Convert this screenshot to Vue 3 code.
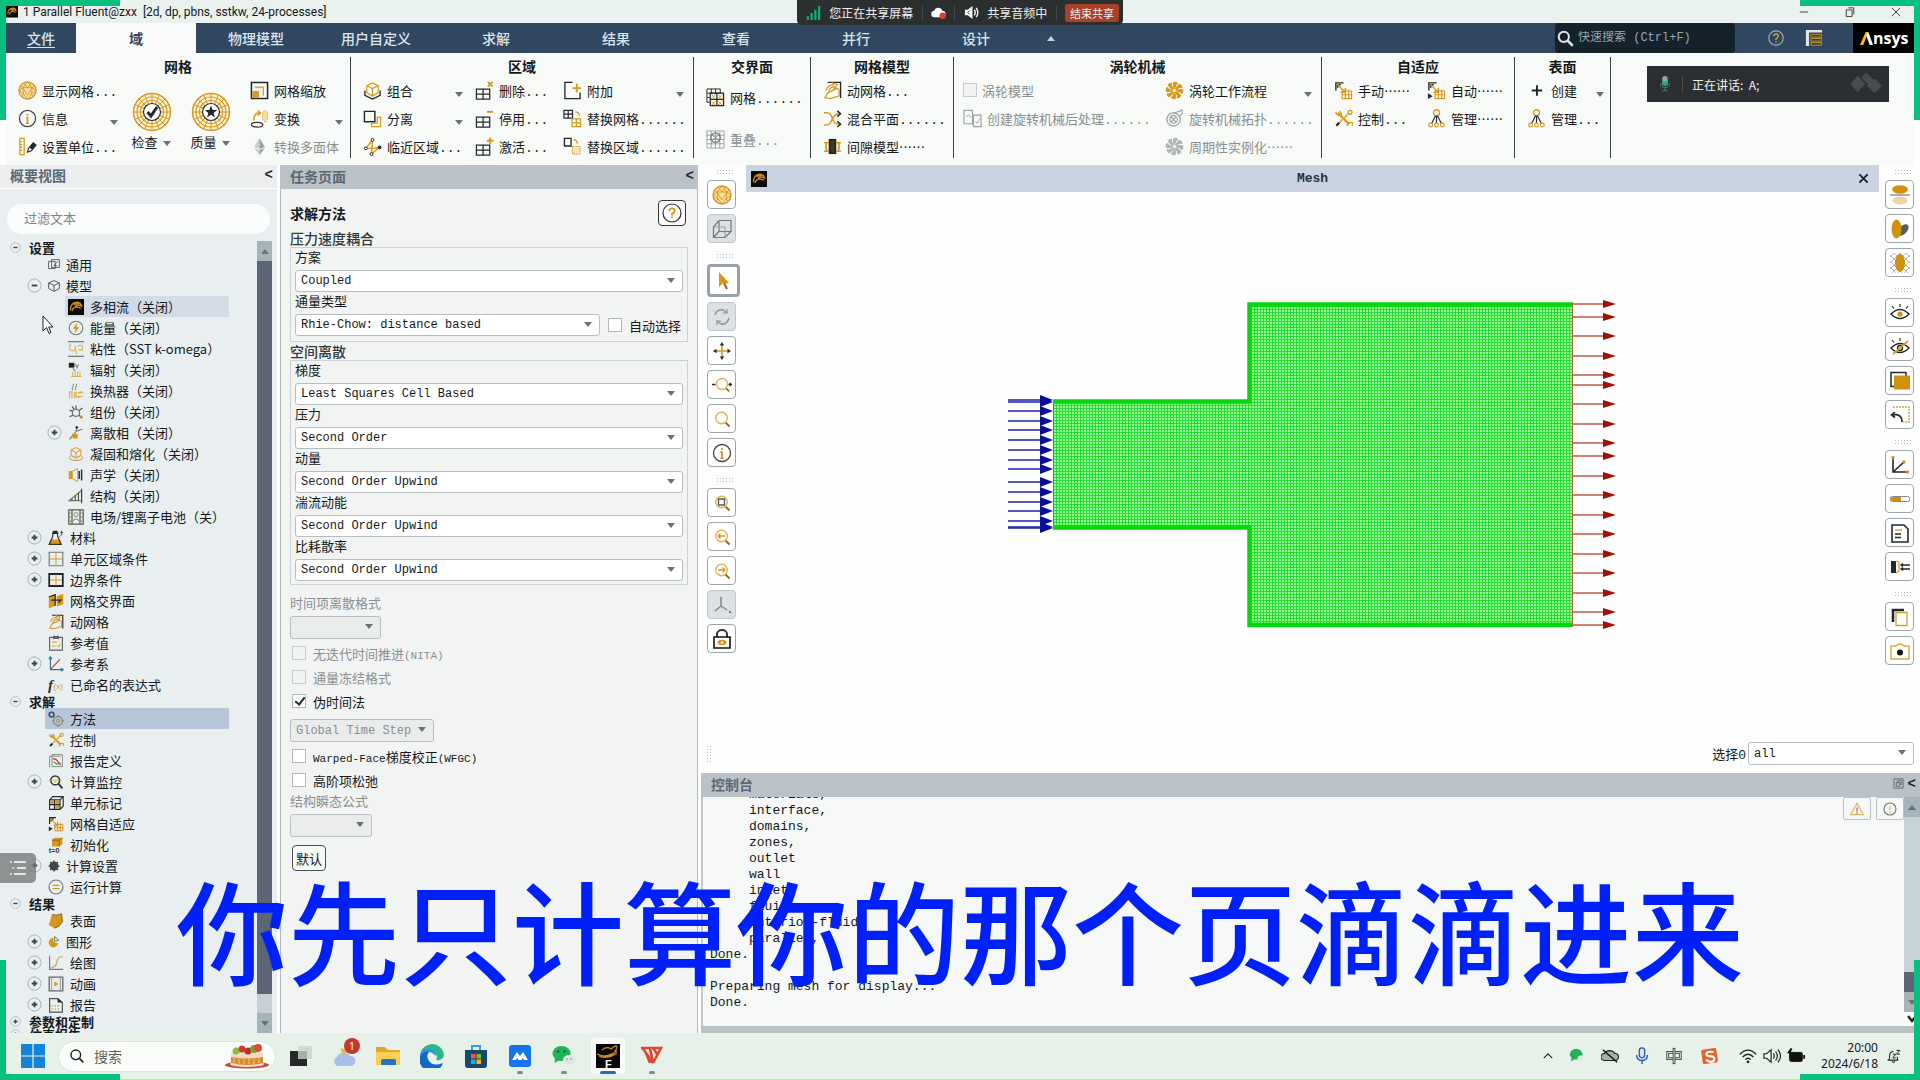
<template>
  <div class="app">
    <header class="titlebar">
      <svg class="app-icon" viewBox="0 0 20 20" v-html="icons.fluent"></svg>
      <span class="title">1 Parallel Fluent@zxx&nbsp; [2d, dp, pbns, sstkw, 24-processes]</span>
      <div class="win-buttons">
        <button aria-label="最小化"><svg viewBox="0 0 12 12"><path d="M1 6h10" stroke="#222" fill="none" /></svg></button>
        <button aria-label="还原"><svg viewBox="0 0 12 12"><path d="M1.500 3.500h7v8h-7zM4 1h6.500v8" stroke="#222" fill="none" /></svg></button>
        <button aria-label="关闭"><svg viewBox="0 0 12 12"><path d="M1 1l10 10M11 1L1 11" stroke="#222" fill="none" /></svg></button>
      </div>
    </header>

    <nav class="tabs">
      <button class="tab tab-file">文件</button>
      <button v-for="t in tabs" :key="t" class="tab" :class="{ active: t === '域' }">{{ t }}</button>
      <button class="tab-collapse" aria-label="折叠功能区"><i class="tri up"></i></button>
      <label class="quick-search">
        <svg viewBox="0 0 20 20"><circle cx="8" cy="8" r="6" fill="none" stroke="#dde3e8" stroke-width="2.400" /><path d="M12.500 12.500l6 6" stroke="#dde3e8" stroke-width="3" /></svg>
        <input type="text" placeholder="快速搜索 (Ctrl+F)" />
      </label>
      <button class="tab-icon" aria-label="帮助">
        <svg viewBox="0 0 20 20"><circle cx="10" cy="10" r="8" fill="none" stroke="#9fb0b8" stroke-width="1.300" /><path d="M7.500 8q0-2.500 2.500-2.500t2.500 2.300q0 1.400-2.500 3.200v1.500M10 13.500v1.500" fill="none" stroke="#c9a640" stroke-width="1.500" /></svg>
      </button>
      <button class="tab-icon" aria-label="布局">
        <svg viewBox="0 0 20 20"><path d="M1 1h18v3H1zM1 4h3.500v15H1z" fill="#dfe5ea" /><path d="M6.500 6h12v3h-12zM6.500 10.500h12v3h-12zM6.500 15h12v3h-12z" fill="#3a3f38" stroke="#c99a2a" /></svg>
      </button>
      <div class="ansys" aria-label="Ansys">
        <svg viewBox="0 0 14 16"><path d="M0 15L6 1h3L3.500 15z" fill="#ffb71b" /><path d="M6.500 4.500L9 1l5 14h-3.500z" fill="#fff" /></svg>nsys
      </div>
    </nav>

    <section class="ribbon">
      <div v-for="g in groups" :key="g.title" class="group" :class="g.cls">
        <h2>{{ g.title }}</h2>
        <div class="cols">
          <div v-for="(col, i) in g.cols" :key="i" class="col">
            <template v-for="it in col" :key="it.label">
              <label v-if="it.check" class="item disabled">
                <input type="checkbox" class="cb" disabled /><span>{{ it.label }}</span>
              </label>
              <button v-else class="item" :class="{ disabled: it.off, big: it.big, cjk: it.label.includes('…') }" :disabled="it.off">
                <svg :viewBox="it.big ? '0 0 40 40' : '0 0 20 20'" v-html="icons[it.icon]"></svg>
                <span>{{ it.label }}</span>
                <i v-if="it.drop" class="tri down"></i>
              </button>
            </template>
          </div>
        </div>
      </div>
    </section>

    <main class="main">
      <!-- outline tree -->
      <aside class="outline">
        <header class="panel-head light"><span>概要视图</span><button aria-label="折叠">{{ '<' }}</button></header>
        <input class="filter" type="text" placeholder="过滤文本" aria-label="过滤文本" />
        <div class="tree-wrap">
          <ul class="tree">
            <li v-for="n in tree" :key="n.text" :class="['lv' + n.lv, { small: n.small, hover: n.hover, selected: n.sel }]">
              <button v-if="n.t" class="toggle" :aria-label="n.t === '+' ? '展开' : '收起'">
                <svg viewBox="0 0 16 16">
                  <circle cx="8" cy="8" r="7" fill="none" stroke="#a4adb1" />
                  <path :d="n.t === '+' ? 'M5 8h6M8 5v6' : 'M5 8h6'" stroke="#3c4449" stroke-width="2" />
                </svg>
              </button>
              <span v-else class="toggle"></span>
              <span class="node">
                <svg v-if="n.icon" viewBox="0 0 20 20" v-html="icons[n.icon]"></svg>{{ n.text }}
              </span>
            </li>
          </ul>
          <div class="vbar"><i class="vbtn"><i class="tri up"></i></i><i class="vthumb"></i><i class="vrest"></i><i class="vbtn"><i class="tri down"></i></i></div>
        </div>
      </aside>

      <!-- task page -->
      <section class="task">
        <header class="panel-head"><span>任务页面</span><button aria-label="折叠">{{ '<' }}</button></header>
        <div class="task-body">
          <div class="task-title">
            <h3>求解方法</h3>
            <button class="help" aria-label="帮助"><svg viewBox="0 0 20 20" v-html="icons.help"></svg></button>
          </div>

          <h4>压力速度耦合</h4>
          <div class="box">
            <label for="scheme">方案</label>
            <span class="sel"><select id="scheme"><option>Coupled</option></select></span>
            <label for="flux">通量类型</label>
            <div class="flux-row">
              <span class="sel"><select id="flux"><option>Rhie-Chow: distance based</option></select></span>
              <label class="check"><input type="checkbox" class="cb" />自动选择</label>
            </div>
          </div>

          <h4>空间离散</h4>
          <div class="box box-last">
            <template v-for="(f, i) in spatial" :key="f[0]">
              <label :for="'sp' + i">{{ f[0] }}</label>
              <span class="sel"><select :id="'sp' + i"><option>{{ f[1] }}</option></select></span>
            </template>
          </div>

          <div class="options">
            <label for="transient" class="off">时间项离散格式</label>
            <span class="sel off w-short"><select id="transient" disabled><option></option></select></span>
            <label class="check off"><input type="checkbox" class="cb" disabled /><span>无迭代时间推进<small>(NITA)</small></span></label>
            <label class="check off"><input type="checkbox" class="cb" disabled />通量冻结格式</label>
            <label class="check"><input type="checkbox" class="cb" checked />伪时间法</label>
            <span class="sel off w-long"><select aria-label="伪时间法类型" disabled><option>Global Time Step</option></select></span>
            <label class="check"><input type="checkbox" class="cb" /><span><small>Warped-Face</small>梯度校正<small>(WFGC)</small></span></label>
            <label class="check"><input type="checkbox" class="cb" />高阶项松弛</label>
            <label for="struct" class="off">结构瞬态公式</label>
            <span class="sel off w-tiny"><select id="struct" disabled><option></option></select></span>
            <button class="default">默认</button>
          </div>
        </div>
      </section>

      <section class="work">
        <div class="graphics">
          <div class="tools tools-left">
            <template v-for="(t, i) in leftTools" :key="i">
              <i v-if="t === '-'" class="grip"></i>
              <button v-else :class="{ pressed: t.on, gray: t.off }" :aria-label="t.name"><svg viewBox="0 0 20 20" v-html="icons[t.icon]"></svg></button>
            </template>
          </div>
          <div class="view">
            <header class="view-head">
              <svg viewBox="0 0 20 20" v-html="icons.fluent"></svg>
              <span>Mesh</span>
              <button aria-label="关闭"><svg viewBox="0 0 12 12"><path d="M1.500 1.500l9 9M10.500 1.500l-9 9" stroke="#1c2330" stroke-width="2" /></svg></button>
            </header>
            <svg class="canvas" viewBox="746 192 1133 548">
              <defs>
                <pattern id="cells" width="3" height="3" patternUnits="userSpaceOnUse">
                  <rect width="3" height="3" fill="#96fb96" />
                  <path d="M0 .5h3M.5 0v3" stroke="#2ade31" />
                </pattern>
              </defs>
              <path d="M1053 401H1250V304H1572V625H1250V527H1053z" fill="url(#cells)" />
              <path d="M1053 401.500H1249.500V304.500H1572M1053 527.500H1249.500V625H1572" fill="none" stroke="#06d60d" stroke-width="4.500" />
              <path d="M1572.500 302V627" stroke="#b5642c" />
              <path d="M1053.500 404V525" stroke="#4a6ae0" />
              <g v-for="y in inlet" :key="'i' + y">
                <path :d="`M1008 ${y}H1041`" stroke="#1a1fa8" stroke-width="1.300" />
                <path :d="`M1040 ${y - 5}L1053 ${y}L1040 ${y + 5}z`" fill="#0a0f98" />
              </g>
              <g v-for="y in outlet" :key="'o' + y">
                <path :d="`M1573 ${y}H1604`" stroke="#b8402c" stroke-width="1.300" />
                <path :d="`M1603 ${y - 4}L1616 ${y}L1603 ${y + 4}z`" fill="#9c1408" />
              </g>
            </svg>
          </div>
          <div class="tools tools-right">
            <template v-for="(t, i) in rightTools" :key="i">
              <i v-if="t === '-'" class="grip"></i>
              <button v-else :aria-label="t.name"><svg viewBox="0 0 20 20" v-html="icons[t.icon]"></svg></button>
            </template>
          </div>
        </div>

        <div class="selection">
          <i class="vgrip"></i>
          <label for="pick">选择0</label>
          <span class="sel"><select id="pick"><option>all</option></select></span>
        </div>

        <div class="console">
          <header class="panel-head">
            <span>控制台</span>
            <button aria-label="浮动"><svg viewBox="0 0 12 12"><path d="M1 1h10v10H1zM3.500 5h4v4h-4zM5 5V3h4v4H7.500" fill="none" stroke="#5c6670" /></svg></button>
            <button aria-label="折叠">{{ '<' }}</button>
          </header>
          <div class="console-body">
            <pre>{{ log }}</pre>
            <div class="console-buttons">
              <button aria-label="警告"><svg viewBox="0 0 20 20"><path d="M10 3L18 17H2z" fill="none" stroke="#dcb464" stroke-width="1.500" /><path d="M10 8v5M10 14v2" stroke="#8b7440" stroke-width="1.600" /></svg></button>
              <button aria-label="信息"><svg viewBox="0 0 20 20"><circle cx="10" cy="10" r="7.500" fill="none" stroke="#777" stroke-width="1.400" /><path d="M10 5.500v6M10 13v2" stroke="#d6b95c" stroke-width="1.500" /></svg></button>
            </div>
            <div class="cbar">
              <i class="vbtn"><i class="tri up"></i></i><i class="crest"></i><i class="cthumb"></i><i class="vbtn"><i class="tri down"></i></i>
              <svg class="ccorner" viewBox="0 0 16 14"><path d="M4 4l4 5 4-5" fill="none" stroke="#222" stroke-width="2.400" /></svg>
            </div>
          </div>
        </div>
      </section>
    </main>

    <footer class="taskbar">
      <button class="tb" aria-label="开始"><svg viewBox="0 0 24 24"><path d="M0 0h11.400v11.400H0zM12.600 0H24v11.400H12.600zM0 12.600h11.400V24H0zM12.600 12.600H24V24H12.600z" fill="#1583d8" /></svg></button>
      <label class="tb-search">
        <svg viewBox="0 0 20 20"><circle cx="8.500" cy="8.500" r="6" fill="none" stroke="#222" stroke-width="1.800" /><path d="M13 13l5 5" stroke="#222" stroke-width="2" /></svg>
        <input type="text" placeholder="搜索" />
        <svg class="cake" viewBox="0 0 46 26">
          <ellipse cx="23" cy="22" rx="22" ry="3.500" fill="#c94b3c" /><ellipse cx="23" cy="21" rx="17" ry="3" fill="#f3e3d4" />
          <path d="M7 10h32v10q-16 4-32 0z" fill="#d98a2e" /><path d="M7 10q16-4 32 0v4q-16 3-32 0z" fill="#f5d9c4" />
          <path d="M10 15v5M15 16v5M20 16v5M25 16v5M30 16v5M35 15v5" stroke="#f0b45c" stroke-width="1.500" />
          <circle cx="12" cy="8" r="3.500" fill="#8dbb3c" /><circle cx="18" cy="6" r="3.500" fill="#d33a2c" /><circle cx="24" cy="8" r="3.500" fill="#c42c26" /><circle cx="30" cy="6" r="4" fill="#6ea63a" /><circle cx="34" cy="5" r="4" fill="#e04a35" />
        </svg>
      </label>
      <button v-for="a in apps" :key="a.icon" class="tb" :class="{ run: a.run, current: a.current }" :aria-label="a.name">
        <svg viewBox="0 0 24 24" v-html="icons[a.icon]"></svg>
        <b v-if="a.badge" class="badge">{{ a.badge }}</b>
      </button>
      <div class="tray">
        <svg v-for="t in tray" :key="t" viewBox="0 0 20 20" :class="'tray-' + t" v-html="icons[t]"></svg>
      </div>
      <div class="clock"><span>20:00</span><span>2024/6/18</span></div>
      <svg class="bell" viewBox="0 0 20 20" v-html="icons.bell"></svg>
    </footer>

    <!-- meeting overlays -->
    <i class="corner tl"></i><i class="corner tr"></i><i class="corner bl"></i><i class="corner br"></i>
    <div class="share-bar">
      <svg viewBox="0 0 16 16"><path d="M2 16v-4M6 16V8.500M10 16V5M14 16V1" stroke="#19a974" stroke-width="2.400" /></svg>
      <span>您正在共享屏幕</span>
      <i></i>
      <svg viewBox="0 0 16 16"><path d="M4 13a3.500 3.500 0 0 1-.5-7 4.500 4.500 0 0 1 8.500 0 3.500 3.500 0 0 1 0 7z" fill="#fff" /><circle cx="12.500" cy="11.500" r="3.500" fill="#e33c2e" /></svg>
      <i></i>
      <svg viewBox="0 0 16 16"><path d="M1 5h3l5-4v14l-5-4H1z" fill="#fff" /><path d="M11 5q2 3 0 6M13 3q3.500 5 0 10" fill="none" stroke="#fff" stroke-width="1.400" /><path d="M6 6l-2 2 2 2" stroke="#333" fill="none" /></svg>
      <span>共享音频中</span>
      <i></i>
      <button>结束共享</button>
    </div>
    <div class="speaking">
      <svg viewBox="0 0 12 20"><rect x="3" y="1" width="6" height="11" rx="3" fill="#8fa6a0" /><path d="M3 7h6v2a3 3 0 0 1-6 0z" fill="#1fae7c" /><path d="M1 9q0 5 5 5t5-5M6 14v3M3 17.500h6" fill="none" stroke="#3d8f78" /></svg>
      <span>正在讲话: &nbsp;A;</span>
      <svg class="wave" viewBox="0 0 40 28"><path d="M9 5l8 9-8 9-8-9zM18 1l8 9-5 6-8-9zM27 8l8 8-8 8-8-8z" fill="#55585b" opacity=".7" /></svg>
    </div>
    <button class="side-menu" aria-label="菜单">
      <svg viewBox="0 0 18 16"><path d="M5 2h12M8 8h9M5 14h12M1 2h1.500M3.500 8h1.500M1 14h1.500" stroke="#fff" stroke-width="1.600" /></svg>
    </button>
    <svg class="cursor" viewBox="0 0 12 20"><path d="M1 1v15l3.500-3.500L7 18.500l2-1-2.300-5.500H11z" fill="#fff" stroke="#222" /></svg>
    <p class="caption">你先只计算你的那个页滴滴进来</p>
  </div>
</template>

<script setup>
const G = '#d6981c'
const K = '#23282c'
const S = '#9ba1a4'

const line = (d, c = K, w = 1.4) => `<path d="${d}" fill="none" stroke="${c}" stroke-width="${w}"/>`
const fill = (d, c = G) => `<path d="${d}" fill="${c}"/>`
const ring = (x, y, r, c = K, w = 1.4, f = 'none') => `<circle cx="${x}" cy="${y}" r="${r}" fill="${f}" stroke="${c}" stroke-width="${w}"/>`

const web = ring(20, 20, 18.5, G, 1.5, '#fdf3d8') + ring(20, 20, 15, G, 1.2) + ring(20, 20, 11.5, G, 1.2) +
  line('M20 1v38M1 20h38M6.500 6.500l27 27M33.500 6.500l-27 27M12.500 3l15 34M27.500 3l-15 34M3 12.500l34 15M3 27.500l34-15', G, 1) +
  ring(20, 20, 8.5, K, 1.2, '#fff')
const cells = line('M1.500 8.500h14v10.500h-14zM8.500 8.500V19M1.500 13.700h14', K, 1.3)
const tools = line('M4 4l12 12', G, 2.4) + line('M16 4L4 16', '#e0b04a', 2) + line('M2 3q0 4 4 3.500T5.500 2M14 18q0-4 3.500-4t1.500 3.500', G, 1.4) + line('M2.500 17.500l3-3', K, 2.4) + ring(17, 3.5, 2, G)
const adapt = line('M2 10V2h8M4 7V4h3', K, 1.5) + line('M3 3l9 9M12 7v5H7', G, 1.5) + line('M8.500 10.500h10v8h-10zM12 9v10M15.500 9v10M8 14.500h11', G, 1.2)
const manage = ring(10, 4, 3.2, G) + line('M9 7l-4 8M10 7v8M11 7l4 8', K, 1.2) + ring(3.8, 16.8, 2, G, 1.2) + ring(10, 16.8, 2, G, 1.2) + ring(16.2, 16.8, 2, G, 1.2)
const fan = c => [0, 45, 90, 135, 180, 225, 270, 315].map(a => `<path d="M10 10Q7.500 5 9 .8q4-.6 5 2-2.500.6-2.600 3.200z" fill="${c}" transform="rotate(${a} 10 10)"/>`).join('') + '<circle cx="10" cy="10" r="1.500" fill="#fff"/>'
const lens = line('M13.500 13.500l4 4', '#86672a', 1.8) + ring(9.5, 9, 5.8, '#dfb355', 1.4)
const dyn = line('M5 1.500h13.500V18', K, 1.4) + line('M3 10q2-6 8-6l-1-2 5 2-3 4-.5-2Q7 7 6 11M2 17.500l3-5 10-5 2 2v6l-9 3z', G, 1.3)
const box3d = c => line('M3 6l7-3 7 3v8l-7 3.500L3 14zM3 6l7 3 7-3M10 9v8.500', c, 1.3)

const icons = {
  fluent: fill('M0 0h20v20H0z', '#0b0a08') + line('M3 14q0-9 8-10 5 0 6 5-5-3-8 0M5 15q1-5 6-5 3 0 5 2M7 7q4-2 7-1', '#c98a1c', 1.7),
  ball: ring(10, 10, 9, G, 1.4, '#f8dfa0') + line('M10 1L5 7l-4 3 5 4 4 5 4-5 5-4-4-3zM5 7h10l-5 8zM3 5l2 2 1 7-2 2M17 5l-2 2-1 7 2 2M6 2l4 5 4-5', G, .9),
  info: ring(10, 10, 8.5, '#444', 1.3) + line('M10 5v2M10 8.500V15M8.500 15h3M8.500 9H10', G, 1.8),
  help: ring(10, 10, 9, '#333', 1.2) + line('M7.200 8q0-2.700 2.800-2.700t2.800 2.300q0 1.600-2.800 3.400v1.500M10 13.500v1.700', G, 1.8),
  units: line('M2 1.500h4.500v17H2zM2 5h2.500M2 8h2.500M2 11h2.500M2 14h2.500', G, 1.3) + line('M10 16l1-4 5-6 3 2.500-5 6z', K, 1.2) + fill('M12 11l4-5 3 2.500-4 5z', K),
  check: web + line('M15.500 20l3.500 4 6-9', K, 3),
  star: web + fill('M20 13.500l1.700 4.500h4.600l-3.700 2.900 1.400 4.600-4-2.800-4 2.800 1.400-4.600-3.700-2.900h4.600z', K),
  scale: line('M1.500 1.500h17v17h-17z', K, 1.6) + fill('M2.500 10.500h7v7h-7z') + line('M5 6.500h9v9', G, 1.3),
  transform: '<ellipse cx="7.500" cy="16.500" rx="6" ry="2.500" fill="none" stroke="#333" stroke-width="1.300"/><ellipse cx="16" cy="7.500" rx="2.800" ry="6" fill="#f7e0a8" stroke="#d6981c" stroke-dasharray="1.500 1"/>' + line('M4 12q0-8 6-8M8 1.500L11 4 8 7', G, 1.5),
  poly: fill('M10 1L4 11l6 8z', '#c9cdce') + fill('M10 1l6 10-6 8z', '#9a9fa1') + line('M4 11l6 2 6-2', '#fff', 1),
  combine: line('M2 10v5l8 4 8-4v-5', K, 1.4) + line('M4 5l6-3 6 3v7l-6 4-6-4zM4 5l6 3 6-3M10 8v8', G, 1.3),
  separate: line('M1.500 2.500h11v11h-11z', K, 1.5) + line('M15 8.500h3.500v10H9V15h6z', G, 1.3),
  adjacent: line('M3 12L10 3l-1 15 8-7M3 12h8l6-1', G, 1.5) + ring(10, 3, 1.5, K, 1, '#fff') + ring(3, 12, 1.5, K, 1, '#fff') + ring(17.5, 11, 1.5, K, 1, K) + ring(9, 18, 1.5, K, 1, '#fff'),
  cellDel: cells + line('M13.500 1l5 5M18.500 1l-5 5', G, 2),
  cellOff: cells + line('M12.500 3H19', G, 2),
  cellOn: cells + line('M12.500 4h7M16 .5v7', G, 2),
  append: line('M10 1.500H2v17h16V12', K, 1.4) + line('M10 7.500h9M14.500 3v9', G, 2),
  replaceMesh: line('M1 1.500h9v8H1zM5.500 1.500v8M1 5.500h9', K, 1.3) + line('M9.500 10.500h9v8h-9zM14 10.500v8M9.500 14.500h9M13 3q4 0 4 4', G, 1.3),
  replaceZone: line('M1.500 1.500h7v8h-7z', K, 1.4) + `<path d="M10 10h8v8h-8z" fill="#f5e6c0" stroke="${G}" stroke-dasharray="2 1"/>` + line('M11 3q4 0 4 4', G),
  ifGrid: line('M1 1h14v14H1zM5.500 1v14M10 1v14M1 5.500h14M1 10h14', K, 1) + '<path d="M4 6h15v13H4z" fill="#fdf7e6"/>' + line('M4.500 5.500h14v13h-14zM11.500 6v13M5 12h14', K, 1.3) + line('M6 7l4 4M10 7l-4 4M13 7l4 4M17 7l-4 4M6 14l4 4M10 14l-4 4M13 14l4 4M17 14l-4 4', G, 1),
  overset: line('M1 1h18v18H1zM1 5.500h18M1 10h18M1 14.500h18M5.500 1v18M10 1v18M14.500 1v18', S, 1) + ring(10, 8, 5, '#777', 1.3) + line('M6 5l8 6M14 5l-8 6', '#888', 1),
  dyn,
  mixing: line('M1 4h3q4 0 6 6t6 6h2M1 17h2q4 0 6-5t6-7h3', G, 1.5) + line('M15 13l3.500 3-3.500 3M15 2l3.500 3L15 8', K, 1.5),
  gap: fill('M6 2h8v16H6z', K) + line('M1 6h5M1 15h5M14 6h5M14 15h5M4 5q-2 5 0 10M16 5q2 5 0 10', G, 1.6) + fill('M8 4h4v12H8z', '#4a3a12'),
  post: line('M1 1.500h9v14H1zM11 6.500h8v12h-8z', S, 1.2) + line('M3 8l3-2 2 3M13 13l2 2 3-5', S, 1),
  fan: fan(G),
  fanOff: fan('#b0b4b6'),
  pump: ring(9, 11, 7, S, 1.3) + ring(9, 11, 4, S, 1.2) + line('M6 8l6 6M12 8l-6 6M9 4q5-1 9-3v4l-3 3', S, 1.2),
  adapt,
  adaptAuto: adapt + fill('M1 13l5 3-5 3z', K),
  tools,
  manage,
  plus: line('M5 10h11M10.500 4.500v11', K, 2),
  general: line('M1 4h11v12H1z', '#555', 1.5) + line('M6 1h13v13H6zM16 4l-6 7h5', '#555', 1.5),
  model: line('M1 5l9-4 9 4v9l-9 5-9-5zM1 5l9 4 9-4M10 9v10', '#555', 1.6),
  energy: ring(10, 10, 8.5, '#777', 1.4) + fill('M11.500 3L6 11h3.500L8 17l6-8h-3.500z'),
  viscous: line('M0 1h20M0 19h20', '#555', 1.4) + line('M2 6v5q4 3 7-1 3 5 1 6M12 6q4-1 6 0v5h-5M4 6L2 4M9 6q1 2 0 4', '#e0b860', 1.6),
  radiation: fill('M1 1h7v6H1z', '#222') + line('M9 3l2 3M6 8l3 3M13 3l-2 5', '#777', 1.3) + line('M6 18v-6M9 18v-6M12 18v-6M15 18v-6M4 18h13', '#e0b04a', 1.3),
  heatx: line('M6 1q2 2 0 4t0 4M10 1q2 2 0 4t0 4', '#777', 1.2) + line('M2 19v-8h3v8M8 19v-7h2v7M12 12h6l-2-2M18 17h-6l2 2', '#dfae48', 1.4),
  species: ring(10, 11, 4.5, '#777', 1.6) + line('M10 6V2M5 3l3 4M6 14l-4 2M14 14l3 4M6 9L2 8M14 8l4-3', '#555', 1.5) + ring(17, 16, 1, G),
  dpm: line('M2 18L10 8l8-3M10 8l1-6', '#777', 1.5) + fill('M5 11h7v6H6z') + ring(11, 3, 1.2, K, 1, K),
  solid: line('M4 5l6-3 6 3v7l-6 3-6-3zM4 5l6 3 6-3M10 8v7', '#d9a240', 1.4) + line('M2 13q-1 5 8 5t8-5', '#bfa060', 1.5),
  acoustic: fill('M1 5h5v10H1z') + line('M6 5l6-3v16l-6-3', '#d9a240', 1.3) + line('M14 5v10M17 3v14', K, 1.8),
  structure: line('M1 16L17 3v13z', '#6b6b50', 1.3) + line('M5 16v-3M9 16V9.500M13 16V6M17 1v18', '#3a3a2a', 1.3),
  battery: line('M1 1h18v18H1zM5 1v18M15 1v18', '#5a5a4a', 1.5) + ring(10, 7, 2.5, S) + line('M6 15q4-5 8 0M1 5h4M1 10h4M15 5h4M15 10h4M1 15h4M15 15h4', '#8a8a60', 1.3),
  material: fill('M3 12h12l2 6H1z') + line('M6 4v4L1.500 18h15L12 8V4M5 4h8', '#3b3324', 1.5) + fill('M6 1h6v4H6z', K) + line('M14 9l4-4M17 1v5M15 3h4', '#555', 1.2),
  cell: line('M1.500 1.500h17v17h-17z', '#777', 1.4) + line('M10 2v16M2 10h16', G, 1.2),
  boundary: line('M1.500 2.500h17v15h-17z', '#222', 2.2) + line('M10 3v14M3 10h14', G, 1.2),
  interface: fill('M1 5l8-3v14l-8 3zM11 4l8-3v13l-8 3z') + line('M1 5l8-3v14M4 9h12M13 12l4-4', K, 1.5),
  clipboard: line('M2 3h16v16H2z', '#666', 1.5) + fill('M6 1h8v4H6z', '#666') + line('M5 9h6M5 13l2 2 2-2M11 13l2 2 3-4', G, 1.2),
  frames: line('M3 1v16h16', '#2c6ea5', 1.4) + line('M3 17L15 4', '#c8432f', 1.4) + line('M1 4l2-3 2 3M16 15l3 2-3 2', '#1b86a0', 1.3),
  fx: '<text x="0" y="16" font-family="Liberation Serif" font-style="italic" font-weight="bold" font-size="19" fill="#333">f</text><text x="7" y="15" font-family="Liberation Sans" font-size="10" fill="#d6981c">(x)</text>',
  methods: ring(4.5, 4.5, 3, '#39516b', 2) + ring(12.5, 12.5, 5.5, '#7c8a6a', 1.6) + ring(12.5, 12.5, 2, '#a5a058', 1.5) + line('M12.500 5v2M12.500 18v2M5 12.500h2M18 12.500h2', '#7c8a6a', 1.5),
  reportdef: line('M2 18V4h14M5 2h13v15H5z', '#888', 1.2) + line('M6 7l4 1 6 7', '#c43c2e', 1.5) + line('M7 11l4 3 4-1', '#3d9a50', 1.5),
  monitor: ring(9, 8, 5.5, '#333', 2) + line('M13 12l5 6', '#333', 2.4) + line('M1 8h16M9 8v3', '#c9b050', 1),
  cellreg: fill('M3 7h4v4H3zM9 13h5v4H9zM9 7h5v4H9z') + line('M2 6l4-4h13v12l-4 4H2zM2 6h13v12M15 6l4-4M8 6v12M2 12h13', K, 1.4),
  init: fill('M5 3l4-2h9v8l-4 3H5z') + line('M5 4h9v8M14 4l4-3', '#8a6010', 1) + '<text x="1" y="20" font-family="Liberation Sans" font-weight="bold" font-size="9" fill="#333">t=0</text>',
  gear: ring(10, 10, 5, '#444', 5) + line('M10 1v18M1 10h18M3.500 3.500l13 13M16.500 3.500l-13 13', '#444', 2.4),
  run: ring(10, 10, 8.8, '#777', 1.4) + line('M6 8h8M6 12h8', G, 1.7),
  surface: fill('M5 2q6 2 12-1l1 10q-4 7-10 8L1 15z') + line('M5 2q6 2 12-1l1 10q-4 7-10 8', '#7a5510', 1.1),
  graphics: fill('M9 3a8 8 0 1 0 8 9l-8-2z') + line('M11 1l7 6-7 2z', '#555', 1.3),
  plot: line('M2 1v17h17', '#777', 1.4) + line('M3 16q7 0 8-7t7-7', '#c9a860', 1.5),
  anim: line('M1.500 1.500h17v17h-17z', '#666', 1.6) + line('M4.500 2v16M15.500 2v16', '#888', 1) + fill('M8 7l5 3-5 3z'),
  reportpage: line('M2 2h10l6 5v12H2z', '#555', 1.5) + fill('M12 1l6 6h-6z', K) + line('M4 11h2M8 11h2M12 11h2M4 15h2M8 15h2M12 15h2', '#c9a040', 1.5),
  cube: line('M7 1.500h12v11H7zM7 1.500L1.500 8v10.500h11.500L19 12.500M7 12.500l-5.500 6', '#777', 1.2) + line('M2 8h11v10', S, 1.2),
  pointer: fill('M5 1v15l3.500-3.500L15 12z') + line('M10 12l3 6', '#a05a20', 2),
  rotate: line('M3 8q2-6 8-5l4 3M17 11q-2 7-8 6l-4-3', '#8a979e', 1.5) + line('M15 2v4h-4M5 18v-4h4', '#8a979e', 1.2),
  pan: line('M10 4v12M4 10h12', G, 1.6) + fill('M10 1l2.200 3.500h-4.400zM10 19l-2.200-3.500h4.400zM1 10l3.500-2.200v4.400zM19 10l-3.500-2.200v4.400z', K),
  zoomio: ring(10, 9, 5.5, '#dfb355', 1.4) + line('M14 13l3 3.500', '#86672a', 1.6) + line('M0 9.500h3.500M16.500 9.500H20M18.200 7.800v3.500', K, 1.5),
  zoom: lens,
  zoomfit: lens + line('M6.500 6h6v6h-6z', '#555', 1.3),
  zoomprev: lens + line('M6 9h7M8.500 6.500L6 9l2.500 2.500', G, 1.4),
  zoomnext: lens + line('M6 9h7M10.500 6.500L13 9l-2.500 2.500', G, 1.4),
  triad: line('M9 2v9l-6 5M9 11l6 4', '#7f888c', 1.5) + fill('M17 18v-3l3 3z', '#777'),
  lock: line('M5 8V5a5 4 0 0 1 10 0v3', '#333', 2) + line('M2 8h16v11H2z', '#111', 1.6) + '<ellipse cx="10" cy="13.500" rx="4.500" ry="2.800" fill="#d6981c"/><circle cx="10" cy="13.500" r="1.200" fill="#fff"/>',
  reflect: '<ellipse cx="10" cy="4.500" rx="8" ry="4.200" fill="#d09010"/><ellipse cx="10" cy="15.500" rx="7.500" ry="4" fill="#efd3a0"/>' + line('M0 10h20', '#777', 1.2),
  shade: '<ellipse cx="13" cy="11" rx="4" ry="7" transform="rotate(42 13 11)" fill="#5c5c5c"/><ellipse cx="6.500" cy="10" rx="5" ry="9.500" fill="#d09010"/>',
  hatch: line('M-2 6L6-2M-2 12L12-2M-2 18L18-2M0 22L22 0M6 22L22 6M12 22l10-10M14-2l8 8M8-2l14 14M2-2l20 20M-2 0l22 22M-2 6l16 16M-2 12l10 10', '#a9adaf', .8) + '<ellipse cx="10" cy="10" rx="5" ry="9" fill="#d09010"/>',
  eye: line('M1 11q9-9 18 0-9 9-18 0z', K, 1.4) + '<circle cx="10" cy="11" r="2.600" fill="#d09010"/>' + line('M10 1v3M2 3l2 2.500M18 3l-2 2.500', K, 1.2),
  eyeoff: line('M1 11q9-9 18 0-9 9-18 0z', K, 1.4) + ring(10, 11, 2.5, K) + line('M10 1v3M2 3l2 2.500', K, 1.2) + line('M3 17L18 4', G, 1.8),
  front: line('M1 1.500h15v14H1z', K, 1.5) + fill('M4 4.500h16v14H4z', '#d09010'),
  undo: '<path d="M3 2h16v15h-6" fill="none" stroke="#c9a94e" stroke-width="1.500" stroke-dasharray="2 1"/>' + line('M2 10q10-2 10 7M5 7l-3.500 3L5 12.500', K, 1.6),
  axis: line('M3 2v15h15M3 17L14 7', K, 1.6) + ring(3, 2.5, 1, G) + ring(17.5, 17, 1, G) + ring(14, 7, 1, G),
  slider: '<rect x="0" y="7.500" width="20" height="5" rx="2.500" fill="#fff" stroke="#888"/><path d="M2.500 8H11v4H2.500a2 2 0 0 1 0-4z" fill="#d09010"/>',
  note: line('M2 2h12l4 4v13H2z', K, 1.6) + line('M5 7h7', G, 1.3) + line('M5 11h6M5 14.500h6', K, 1.3),
  probe: fill('M1 4h5v12H1z', K) + line('M6 4l3 1v9l-3 2', G, 1.2) + line('M11 8h9M11 12h9M13 6.500L11 8l2 1.500M13 10.500L11 12l2 1.500', K, 1.3),
  copy: line('M3 15V3h11', K, 2.6) + line('M6 5.500h11v13H6z', '#d0a040', 1.3),
  camera: line('M1 5h5q4-4 8 0h5v13H1z', '#dba93e', 1.4) + '<circle cx="10" cy="11.500" r="3" fill="#111"/>',
  deskview: fill('M10 2h14v13H10z', '#d3d7d6') + fill('M2 7h17v15H2z', '#25292a') + fill('M10 7h9v8h-9z', '#a9aead'),
  weather: fill('M8 4q4 5-1 9h8V6z', '#f3b04a') + fill('M5 22a5 5 0 0 1 0-9 7 6 0 0 1 13-1 5 5 0 0 1 1 10z', '#aabfe8'),
  folder: fill('M0 3h9l3 3h12v15H0z', '#e0a92c') + fill('M0 8h24v13H0z', '#fbcf57') + fill('M5 17q0-2 2-2h11q2 0 2 2v4H5z', '#1d77c9'),
  edge: fill('M12 0a12 12 0 0 1 12 11q-1 6-8 5 3-5-3-7Q4 6 0 13 0 2 12 0z', '#2fb58d') + fill('M0 12q3-7 10-5-5 4-1 10t14 2A12 12 0 0 1 0 12z', '#1368c4') + fill('M3 5q-3 4-3 8 4-7 11-5l5 4q0-8-13-7z', '#2b95e0'),
  store: fill('M1 6h22v15q0 3-3 3H4q-3 0-3-3z', '#17486f') + line('M8 6V2h8v4', '#3aa0dd', 2) + fill('M7 10h4.500v4.500H7z', '#f05a28') + fill('M12.500 10H17v4.500h-4.500z', '#80bb2b') + fill('M7 15.500h4.500V20H7z', '#2ba6e0') + fill('M12.500 15.500H17V20h-4.500z', '#fdb913'),
  meeting: '<rect x="1" y="1" width="22" height="22" rx="3" fill="#1674f0"/>' + fill('M4 16l5-8 3 4 3-4 5 8h-4l-1-2-1.500 2h-3L9 14l-1 2z', '#fff'),
  wechat: '<ellipse cx="9.500" cy="9.500" rx="9" ry="7.500" fill="#21b35a"/><path d="M3 14l-.5 5 5-3z" fill="#21b35a"/><circle cx="6" cy="7.500" r="1.200" fill="#0c5c2c"/><circle cx="12.500" cy="7.500" r="1.200" fill="#0c5c2c"/><ellipse cx="17" cy="16" rx="6" ry="5" fill="#dfe6e2"/><circle cx="15" cy="15" r=".8" fill="#889"/><circle cx="19" cy="15" r=".8" fill="#889"/>',
  fluentF: fill('M0 0h24v24H0z', '#080808') + line('M1 10q8 5 20-3M3 12q8 4 18-3M6 6q5-4 9-1 4-4 6-3-1 8-8 10-6 2-10 0', '#c98a1c', 1.2) + '<text x="9" y="23.500" font-family="Liberation Sans" font-weight="bold" font-size="11" fill="#fff">F</text>',
  wps: line('M1 4h9l3 15L2.500 4M10 19L6 9M13 19l8-15h-8l4 6', '#e0452c', 2.6),
  chevron: line('M4 13l6-6 6 6', '#222', 1.6),
  wechatSmall: '<ellipse cx="8" cy="8" rx="7" ry="6" fill="#22b05c"/><path d="M3 12l-1 4 5-3z" fill="#22b05c"/><circle cx="13" cy="13" r="3.500" fill="#dcefe2"/>',
  cloudOff: '<path d="M4 15a4 4 0 0 1 0-8 6 5 0 0 1 11 0 4 4 0 0 1 1 8z" fill="#aab0ae" stroke="#222" stroke-width="1.300"/>' + line('M2 3l16 14', '#111', 1.6),
  mic: '<rect x="7" y="1" width="6" height="11" rx="3" fill="#d5e6fa" stroke="#2558a8" stroke-width="1.400"/>' + line('M4 9q0 6 6 6t6-6M10 15v4', '#2558a8', 1.5),
  ime: line('M3 6h14v7H3z', '#3a3e3c', 3) + line('M3 6h14v7H3z', '#f4f8f5', 1) + line('M10 1v18', '#3a3e3c', 3) + line('M10 2v16', '#f4f8f5', 1),
  sogou: '<rect x="1" y="2" width="17" height="16" rx="2" fill="#e8622c" transform="rotate(-8 10 10)"/>' + line('M14 5.500q-8-1-8 2t5 3 3.500 4-9 0', '#fff', 2.4),
  wifi: line('M1 8q9-9 18 0M4 11q6-6 12 0M7 14q3-3 6 0', '#222', 1.5) + '<circle cx="10" cy="16.500" r="1.500" fill="#222"/>',
  sound: line('M1 7.500h3l5-4.500v14l-5-4.500H1zM11.500 7q2 3 0 6M14 5q4 5 0 10M16.500 3q6 7 0 14', '#222', 1.3),
  charge: '<rect x="3" y="6" width="14" height="10" rx="1.500" fill="#111" stroke="#111"/>' + fill('M18 9h2v4h-2z', '#111') + fill('M4 1L0 7h3l-1 5 5-6H4l2-4z', '#111'),
  bell: line('M4 15q1-2 1-6 0-5 5-5M2 15.500h14M15 11q0 3 1 4.500M8 17q2 3 4 0', '#222', 1.4) + line('M9 7.500h4l-4 5h4M14 2.500h4.500l-4.500 5h4.500', '#222', 1.3),
}

const tabs = ['域', '物理模型', '用户自定义', '求解', '结果', '查看', '并行', '设计']

const groups = [
  {
    title: '网格', cls: 'g-mesh', cols: [
      [{ icon: 'ball', label: '显示网格...' }, { icon: 'info', label: '信息', drop: true }, { icon: 'units', label: '设置单位...' }],
      [{ icon: 'check', label: '检查', big: true, drop: true }],
      [{ icon: 'star', label: '质量', big: true, drop: true }],
      [{ icon: 'scale', label: '网格缩放' }, { icon: 'transform', label: '变换', drop: true }, { icon: 'poly', label: '转换多面体', off: true }],
    ],
  },
  {
    title: '区域', cls: 'g-zone', cols: [
      [{ icon: 'combine', label: '组合', drop: true }, { icon: 'separate', label: '分离', drop: true }, { icon: 'adjacent', label: '临近区域...' }],
      [{ icon: 'cellDel', label: '删除...' }, { icon: 'cellOff', label: '停用...' }, { icon: 'cellOn', label: '激活...' }],
      [{ icon: 'append', label: '附加', drop: true }, { icon: 'replaceMesh', label: '替换网格......' }, { icon: 'replaceZone', label: '替换区域......' }],
    ],
  },
  { title: '交界面', cls: 'g-if', cols: [[{ icon: 'ifGrid', label: '网格......' }, { icon: 'overset', label: '重叠...', off: true }]] },
  { title: '网格模型', cls: 'g-model', cols: [[{ icon: 'dyn', label: '动网格...' }, { icon: 'mixing', label: '混合平面......' }, { icon: 'gap', label: '间隙模型……' }]] },
  {
    title: '涡轮机械', cls: 'g-turbo', cols: [
      [{ label: '涡轮模型', check: true }, { icon: 'post', label: '创建旋转机械后处理......', off: true }],
      [{ icon: 'fan', label: '涡轮工作流程', drop: true }, { icon: 'pump', label: '旋转机械拓扑......', off: true }, { icon: 'fanOff', label: '周期性实例化……', off: true }],
    ],
  },
  {
    title: '自适应', cls: 'g-adapt', cols: [
      [{ icon: 'adapt', label: '手动……' }, { icon: 'tools', label: '控制...' }],
      [{ icon: 'adaptAuto', label: '自动……' }, { icon: 'manage', label: '管理……' }],
    ],
  },
  { title: '表面', cls: 'g-surf', cols: [[{ icon: 'plus', label: '创建', drop: true }, { icon: 'manage', label: '管理...' }]] },
]

const tree = [
  { lv: 0, t: '-', text: '设置' },
  { lv: 1, icon: 'general', text: '通用', small: true },
  { lv: 1, t: '-', icon: 'model', text: '模型', small: true },
  { lv: 2, icon: 'fluent', text: '多相流（关闭）', hover: true },
  { lv: 2, icon: 'energy', text: '能量（关闭）' },
  { lv: 2, icon: 'viscous', text: '粘性（SST k-omega）' },
  { lv: 2, icon: 'radiation', text: '辐射（关闭）' },
  { lv: 2, icon: 'heatx', text: '换热器（关闭）' },
  { lv: 2, icon: 'species', text: '组份（关闭）' },
  { lv: 2, t: '+', icon: 'dpm', text: '离散相（关闭）' },
  { lv: 2, icon: 'solid', text: '凝固和熔化（关闭）' },
  { lv: 2, icon: 'acoustic', text: '声学（关闭）' },
  { lv: 2, icon: 'structure', text: '结构（关闭）' },
  { lv: 2, icon: 'battery', text: '电场/锂离子电池（关）' },
  { lv: 1, t: '+', icon: 'material', text: '材料' },
  { lv: 1, t: '+', icon: 'cell', text: '单元区域条件' },
  { lv: 1, t: '+', icon: 'boundary', text: '边界条件' },
  { lv: 1, icon: 'interface', text: '网格交界面' },
  { lv: 1, icon: 'dyn', text: '动网格' },
  { lv: 1, icon: 'clipboard', text: '参考值' },
  { lv: 1, t: '+', icon: 'frames', text: '参考系' },
  { lv: 1, icon: 'fx', text: '已命名的表达式' },
  { lv: 0, t: '-', text: '求解' },
  { lv: 1, icon: 'methods', text: '方法', sel: true },
  { lv: 1, icon: 'tools', text: '控制' },
  { lv: 1, icon: 'reportdef', text: '报告定义' },
  { lv: 1, t: '+', icon: 'monitor', text: '计算监控' },
  { lv: 1, icon: 'cellreg', text: '单元标记' },
  { lv: 1, icon: 'adaptAuto', text: '网格自适应' },
  { lv: 1, icon: 'init', text: '初始化' },
  { lv: 1, t: '+', icon: 'gear', text: '计算设置', small: true },
  { lv: 1, icon: 'run', text: '运行计算' },
  { lv: 0, t: '-', text: '结果' },
  { lv: 1, icon: 'surface', text: '表面' },
  { lv: 1, t: '+', icon: 'graphics', text: '图形', small: true },
  { lv: 1, t: '+', icon: 'plot', text: '绘图' },
  { lv: 1, t: '+', icon: 'anim', text: '动画' },
  { lv: 1, t: '+', icon: 'reportpage', text: '报告' },
  { lv: 0, t: '+', text: '参数和定制' },
  { lv: 0, t: '+', text: '仿真报告' },
]

const spatial = [
  ['梯度', 'Least Squares Cell Based'],
  ['压力', 'Second Order'],
  ['动量', 'Second Order Upwind'],
  ['湍流动能', 'Second Order Upwind'],
  ['比耗散率', 'Second Order Upwind'],
]

const leftTools = [
  '-',
  { icon: 'ball', name: '显示网格' },
  { icon: 'cube', name: '视图', off: true },
  '-',
  { icon: 'pointer', name: '选择', on: true },
  { icon: 'rotate', name: '旋转', off: true },
  { icon: 'pan', name: '平移' },
  { icon: 'zoomio', name: '缩放' },
  { icon: 'zoom', name: '放大' },
  { icon: 'info', name: '探测' },
  '-',
  { icon: 'zoomfit', name: '适应窗口' },
  { icon: 'zoomprev', name: '上一视图' },
  { icon: 'zoomnext', name: '下一视图' },
  { icon: 'triad', name: '坐标轴', off: true },
  { icon: 'lock', name: '锁定视图' },
]

const rightTools = [
  '-',
  { icon: 'reflect', name: '反射' },
  { icon: 'shade', name: '阴影' },
  { icon: 'hatch', name: '背景' },
  '-',
  { icon: 'eye', name: '显示' },
  { icon: 'eyeoff', name: '隐藏' },
  { icon: 'front', name: '前置' },
  { icon: 'undo', name: '撤销' },
  '-',
  { icon: 'axis', name: '坐标系' },
  { icon: 'slider', name: '色标' },
  { icon: 'note', name: '注释' },
  { icon: 'probe', name: '边界标记' },
  '-',
  { icon: 'copy', name: '复制' },
  { icon: 'camera', name: '截图' },
]

const inlet = [400, 402, 411, 421, 430, 440, 450, 460, 469, 482, 492, 502, 511, 521, 527, 528]
const outlet = [304, 317, 336, 356, 375, 385, 404, 424, 443, 456, 476, 495, 515, 534, 554, 573, 593, 612, 625]

const log = [
  '     materials,',
  '     interface,',
  '     domains,',
  '     zones,',
  '     outlet',
  '     wall',
  '     inlet',
  '     fluid',
  '     interior-fluid',
  '     parallel,',
  'Done.',
  '',
  'Preparing mesh for display...',
  'Done.',
].join('\n')

const apps = [
  { icon: 'deskview', name: '任务视图' },
  { icon: 'weather', name: '天气', badge: 1 },
  { icon: 'folder', name: '文件资源管理器' },
  { icon: 'edge', name: 'Edge' },
  { icon: 'store', name: '应用商店' },
  { icon: 'meeting', name: '会议', run: true },
  { icon: 'wechat', name: '微信', run: true },
  { icon: 'fluentF', name: 'Fluent', current: true },
  { icon: 'wps', name: 'WPS', run: true },
]
const tray = ['chevron', 'wechatSmall', 'cloudOff', 'mic', 'ime', 'sogou', 'wifi', 'sound', 'charge']
</script>

<style>
body {
  background: #fdfefd;
}
</style>

<style scoped>
* {
  box-sizing: border-box;
}

.app {
  position: relative;
  display: flex;
  flex-direction: column;
  height: 100vh;
  overflow: hidden;
  font-family: 'Liberation Mono', 'Noto Sans CJK SC', monospace;
  font-size: 13px;
  color: #15181a;
}

button {
  padding: 0;
  border: 0;
  background: none;
  font: inherit;
  color: inherit;
}

h2, h3, h4, p, pre, ul {
  margin: 0;
  padding: 0;
}

svg {
  display: block;
  flex: none;
}

.tri {
  flex: none;
  width: 0;
  height: 0;
  border-left: 4px solid transparent;
  border-right: 4px solid transparent;
}

.tri.down { border-top: 5px solid #6c7073; }
.tri.up { border-bottom: 5px solid #6c7073; }

/* Title bar */
.titlebar {
  display: flex;
  align-items: center;
  flex: none;
  height: 23px;
  padding: 0 18px 0 6px;
  background: #eaf2f0;
}

.app-icon {
  width: 12px;
  height: 13px;
}

.title {
  flex: 1;
  margin-left: 5px;
  font-family: Roboto, sans-serif;
  font-size: 12px;
}

.win-buttons {
  display: flex;
  gap: 34px;
}

.win-buttons svg {
  width: 12px;
  height: 10px;
}

/* Tabs */
.tabs {
  display: flex;
  align-items: center;
  flex: none;
  height: 30px;
  margin: 0 6px;
  background: #30475f;
  color: #dbe4ec;
}

.tab {
  width: 120px;
  height: 30px;
  font-size: 14px;
  font-weight: 500;
}

.tab-file {
  width: 70px;
  text-decoration: underline;
  text-decoration-thickness: 1px;
  text-underline-offset: 3px;
}

.tab.active {
  background: #f7faf8;
  color: #30475f;
  font-weight: 700;
}

.tab-collapse {
  width: 30px;
  display: flex;
  justify-content: center;
}

.tab-collapse .tri { border-bottom-color: #c6d2dc; }

.quick-search {
  display: flex;
  align-items: center;
  gap: 4px;
  width: 180px;
  height: 30px;
  margin-left: auto;
  margin-right: 32px;
  padding-left: 2px;
  border-radius: 4px;
  background: #15222c;
}

.quick-search svg {
  width: 17px;
  height: 17px;
}

.quick-search input {
  flex: 1;
  min-width: 0;
  padding: 0;
  border: 0;
  background: none;
  font: inherit;
  font-size: 12px;
}

.quick-search input::placeholder { color: #9aa5ac; }

.tab-icon { margin-right: 20px; }
.tab-icon + .tab-icon { margin-right: 30px; }

.tab-icon svg {
  width: 18px;
  height: 18px;
}

.ansys {
  display: flex;
  align-items: center;
  width: 61px;
  height: 30px;
  padding-left: 7px;
  background: #000;
  color: #fff;
  font-family: 'Open Sans', sans-serif;
  font-size: 16px;
  font-weight: 700;
}

.ansys svg {
  width: 13px;
  height: 15px;
}

/* Ribbon */
.ribbon {
  display: flex;
  flex: none;
  height: 112px;
  margin: 0 6px;
  padding: 4px 0 7px;
  background: #f8faf8;
}

.group {
  border-right: 1px solid #3d4245;
}

.group h2 {
  height: 20px;
  line-height: 22px;
  font-size: 14px;
  font-weight: 700;
  text-align: center;
}

.cols {
  display: grid;
  padding-left: 12px;
}

.g-mesh .cols { grid-template-columns: 104px 59px 69px 93px; padding-right: 7px; }
.g-zone .cols { grid-template-columns: 112px 88px 121px; padding-right: 9px; }
.g-if .cols { grid-template-columns: 104px; }
.g-model .cols { grid-template-columns: 130px; }
.g-turbo .cols { grid-template-columns: 202px 147px; padding-left: 9px; padding-right: 9px; }
.g-adapt .cols { grid-template-columns: 93px 87px; }
.g-surf .cols { grid-template-columns: 77px; padding-right: 6px; }

.col {
  display: flex;
  flex-direction: column;
  gap: 2px;
}

.g-if .col {
  gap: 16px;
  padding-top: 7px;
}

.item {
  display: flex;
  align-items: center;
  gap: 5px;
  height: 26px;
  white-space: nowrap;
  text-align: left;
}

.item svg {
  width: 19px;
  height: 19px;
}

.item .tri {
  margin-top: 8px;
  margin-left: auto;
}

.g-mesh .col:first-child .item,
.g-zone .col:first-child .item { width: 100px; }

.item.disabled { color: #8b8f91; }
.item.cjk { font-family: 'Noto Sans CJK SC', sans-serif; }

.item.big {
  display: grid;
  grid-template-columns: auto auto;
  justify-content: center;
  width: 59px;
  height: 82px;
  padding-top: 15px;
  gap: 0 5px;
  align-content: start;
}

.item.big svg {
  grid-column: 1 / 3;
  justify-self: center;
  width: 40px;
  height: 40px;
}

.item.big .tri { margin: 3px 0 0; }

.cb {
  appearance: none;
  flex: none;
  width: 14px;
  height: 14px;
  margin: 0;
  border: 1px solid #b3b7b8;
  background: #fff;
}

.cb:disabled { background: #f1f3f2; border-color: #c8cbcc; }

.cb:checked::before {
  content: '';
  display: block;
  width: 4px;
  height: 8px;
  margin: 0 0 0 4px;
  border: solid #23282c;
  border-width: 0 2px 2px 0;
  transform: rotate(38deg);
}

/* Main area */
.main {
  display: flex;
  flex: 1;
  min-height: 0;
}

.panel-head {
  display: flex;
  align-items: center;
  gap: 4px;
  flex: none;
  height: 24px;
  padding: 0 4px 3px 10px;
  background: #bac2c7;
  color: #5a6875;
  font-size: 14px;
  font-weight: 700;
}

.panel-head span { flex: 1; }
.panel-head button { color: #20262b; }
.panel-head svg { width: 11px; height: 11px; }

.panel-head.light {
  background: #ebedef;
  border-bottom: 1px solid #fff;
}

.outline {
  display: flex;
  flex-direction: column;
  flex: none;
  width: 277px;
  background: #e9eff0;
}

.filter {
  flex: none;
  height: 30px;
  margin: 15px 7px 3px;
  padding: 0 17px;
  border: 0;
  border-radius: 15px;
  background: #fbfdfc;
  font-family: inherit;
  font-size: 13px;
}

.filter::placeholder { color: #7d8283; }

.tree-wrap {
  display: flex;
  flex: 1;
  min-height: 0;
  padding-right: 5px;
}

.tree {
  flex: 1;
  padding-top: 4px;
  overflow: hidden;
  list-style: none;
  font-family: 'Noto Sans CJK SC', sans-serif;
}

.tree li {
  display: flex;
  align-items: center;
  height: 21px;
  padding-right: 28px;
  white-space: nowrap;
}

.tree .lv0 {
  height: 13px;
  padding-left: 10px;
  font-weight: 700;
}

.tree .lv1 { padding-left: 27px; }
.tree .lv2 { padding-left: 47px; }

.toggle {
  flex: none;
  width: 15px;
  height: 15px;
}

.toggle svg { width: 15px; height: 15px; }

.lv0 .toggle,
.lv0 .toggle svg { width: 11px; height: 11px; }

.node {
  display: flex;
  align-items: center;
  flex: 1;
  gap: 6px;
  height: 21px;
  margin-left: 3px;
  padding-left: 3px;
}

.lv0 .node { padding-left: 5px; }
.node svg { width: 16px; height: 16px; }
.small .node svg { width: 12px; height: 12px; }
.hover .node { background: #d3dbe6; }
.selected .node { background: #b6c6d8; }

.vbar {
  display: flex;
  flex-direction: column;
  width: 15px;
  margin-top: 4px;
}

.vbtn {
  display: flex;
  align-items: center;
  justify-content: center;
  flex: none;
  height: 20px;
  background: #a5b3ba;
}

.vthumb { flex: 1; background: #5c6475; }
.vrest { height: 19px; background: #c8d0d6; }

/* Task page */
.task {
  display: flex;
  flex-direction: column;
  flex: none;
  width: 418px;
  margin-left: 3px;
}

.task-body {
  flex: 1;
  padding: 10px 9px 0;
  border: solid #b3b8ba;
  border-width: 0 1px;
  background: #f2f4f3;
}

.task-title {
  display: flex;
  align-items: center;
  justify-content: space-between;
  height: 28px;
  margin-bottom: 2px;
}

.task h3 { font-size: 14px; }

.help {
  width: 28px;
  height: 26px;
  margin-right: 2px;
  border: 1px solid #33383b;
  border-radius: 4px;
  background: #fbfcfb;
}

.help svg { width: 20px; height: 20px; margin: auto; }

.task h4 {
  height: 18px;
  line-height: 22px;
  font-size: 14px;
  font-weight: 500;
  color: #2f3942;
}

.box {
  display: flex;
  flex-direction: column;
  padding: 0 4px 5px;
  border: 1px solid #cdd1d2;
}

.task-body .box-last { padding-bottom: 3px; }

.box label:not(.check),
.options > label:not(.check) {
  height: 22px;
  line-height: 22px;
}

.sel {
  position: relative;
  display: block;
  height: 22px;
}

.sel select {
  appearance: none;
  width: 100%;
  height: 100%;
  padding: 0 5px;
  border: 1px solid #b9bdbf;
  border-radius: 3px;
  background: #fff;
  font: inherit;
  font-size: 12px;
  color: inherit;
}

.sel::after {
  content: '';
  position: absolute;
  right: 8px;
  top: 8px;
  border: 4px solid transparent;
  border-top: 5px solid #6c7073;
  border-bottom: 0;
}

.sel.off select { background: #e9ecea; opacity: 1; }
.off { color: #8b8f91; }

.flux-row {
  display: flex;
  gap: 8px;
}

.flux-row .sel { flex: 1; }

.check {
  display: flex;
  align-items: center;
  gap: 7px;
  height: 24px;
}

.check small { font-size: 11px; }

.flux-row .check {
  height: 22px;
  padding-right: 2px;
}

.options {
  display: flex;
  flex-direction: column;
  align-items: flex-start;
  margin-top: 9px;
}

.options .sel { height: 23px; }
.options .sel + .check { margin-top: 2px; }
.options .check { padding-left: 2px; }
.options .check + .sel { margin-top: 6px; }
.w-short { width: 91px; }
.w-long { width: 144px; }
.w-tiny { width: 82px; }

.default {
  width: 34px;
  height: 26px;
  margin: 8px 0 0 2px;
  border: 1px solid #4b5054;
  border-radius: 4px;
  background: #f7f9f8;
}

/* Graphics */
.work {
  display: flex;
  flex-direction: column;
  flex: 1;
  min-width: 0;
  margin-left: 3px;
  padding-right: 6px;
}

.graphics {
  display: flex;
  flex: 1;
  min-height: 0;
}

.tools {
  display: flex;
  flex-direction: column;
  gap: 5px;
  flex: none;
  padding-top: 4px;
}

.tools-left { width: 39px; margin: 0 0 0 6px; }
.tools-right { width: 29px; margin-left: 6px; }

.tools button {
  display: flex;
  align-items: center;
  justify-content: center;
  width: 29px;
  height: 29px;
  border: 1px solid #9ea5aa;
  border-radius: 4px;
  background: #fff;
}

.tools svg { width: 20px; height: 20px; }
.tools .gray { background: #dde1e3; border-color: #c0c5c8; }

.tools .pressed {
  width: 33px;
  height: 33px;
  border: 3px solid #98a1a9;
}

.grip {
  width: 17px;
  height: 6px;
  margin: 0 0 0 9px;
  background: radial-gradient(circle, #b5babd 1px, transparent 1px) 0 0 / 3px 3px;
}

.tools button + .grip { margin-top: 5px; }

.view {
  display: flex;
  flex-direction: column;
  flex: 1;
  min-width: 0;
}

.view-head {
  display: flex;
  align-items: center;
  flex: none;
  height: 27px;
  padding: 0 10px 0 5px;
  background: #cad3e0;
  color: #28323e;
  font-weight: 700;
}

.view-head svg { width: 16px; height: 16px; }
.view-head span { flex: 1; text-align: center; }
.view-head button svg { width: 11px; height: 11px; }

.canvas {
  flex: 1;
  min-height: 0;
  width: 100%;
}

.selection {
  display: flex;
  align-items: center;
  flex: none;
  gap: 2px;
  height: 33px;
  padding-bottom: 6px;
}

.vgrip {
  width: 6px;
  height: 18px;
  margin-left: 5px;
  margin-right: auto;
  background: radial-gradient(circle, #b5babd 1px, transparent 1px) 0 0 / 3px 3px;
}

.selection .sel { width: 166px; height: 23px; }

/* Console */
.console {
  display: flex;
  flex-direction: column;
  flex: none;
  height: 260px;
  margin-right: -6px;
  border-bottom: 7px solid #bac2c6;
}

.console-body {
  position: relative;
  display: flex;
  flex: 1;
  min-height: 0;
  overflow: hidden;
  border-left: 2px solid #c3c9cc;
  background: #f5f8f6;
}

.console pre {
  flex: 1;
  align-self: flex-end;
  padding: 0 0 15px 7px;
  font-family: 'Liberation Mono', monospace;
  font-size: 13px;
  line-height: 16px;
}

.console-buttons {
  display: flex;
  gap: 5px;
  height: 23px;
}

.console-buttons button {
  display: flex;
  align-items: center;
  justify-content: center;
  width: 28px;
  border: 1px solid #babfc2;
  border-radius: 2px;
}

.console-buttons svg { width: 16px; height: 16px; }

.cbar {
  display: flex;
  flex-direction: column;
  width: 16px;
  overflow: hidden;
}

.crest { flex: 1; background: #c6d1d8; }
.cthumb { height: 20px; background: #5c6475; }
.ccorner { width: 16px; height: 14px; background: #fff; }

/* Taskbar */
.taskbar {
  display: flex;
  align-items: center;
  flex: none;
  height: 47px;
  padding: 0 19px 0 16px;
  border-bottom: 1px solid #a8f0a0;
  background: #e8f0ea;
}

.tb {
  position: relative;
  display: flex;
  align-items: center;
  justify-content: center;
  width: 34px;
  height: 36px;
}

.tb svg { width: 24px; height: 24px; }
.tb + .tb { margin-left: 10px; }

.tb.current {
  border-radius: 4px;
  background: #f8fbf9;
}

.tb.run::after,
.tb.current::after {
  content: '';
  position: absolute;
  bottom: 0;
  width: 6px;
  height: 3px;
  border-radius: 2px;
  background: #85898a;
}

.tb.current::after { width: 16px; background: #1f6fc0; }

.badge {
  position: absolute;
  right: 1px;
  top: 0;
  width: 16px;
  height: 16px;
  border-radius: 50%;
  background: #c0392b;
  color: #fff;
  font: 11px/16px 'Open Sans', sans-serif;
  text-align: center;
}

.tb-search {
  display: flex;
  align-items: center;
  width: 218px;
  height: 31px;
  margin: 0 7px 0 8px;
  padding: 0 5px 0 10px;
  border-radius: 16px;
  border: 1px solid #dbe3dd;
  background: #fbfdfb;
}

.tb-search svg { width: 16px; height: 16px; }

.tb-search input {
  flex: 1;
  min-width: 0;
  padding: 0 0 0 9px;
  border: 0;
  background: none;
  font-family: 'Noto Sans CJK SC', sans-serif;
  font-size: 14px;
}

.tb-search input::placeholder { color: #5b6061; }
.tb-search .cake { width: 46px; height: 26px; }

.tray {
  display: flex;
  align-items: center;
  gap: 14px;
  margin-left: auto;
}

.tray svg { width: 18px; height: 18px; }
.tray .tray-chevron { width: 14px; height: 14px; }
.tray .tray-ime { margin-right: 4px; }
.tray .tray-sogou { margin-right: 6px; }
.tray .tray-wifi,
.tray .tray-sound { margin-right: -8px; }

.clock {
  display: flex;
  flex-direction: column;
  align-items: flex-end;
  margin: 0 8px 0 16px;
  font-family: 'Noto Sans', sans-serif;
  font-size: 12px;
  line-height: 16px;
}

.bell { width: 15px; height: 16px; }

/* Overlays */
.corner {
  position: absolute;
  width: 120px;
  height: 120px;
  border: 0 solid #07bf7e;
  pointer-events: none;
}

.tl { left: 0; top: 0; border-width: 6px 0 0 6px; }
.tr { right: 0; top: 0; border-width: 6px 6px 0 0; }
.bl { left: 0; bottom: 0; border-width: 0 0 6px 6px; }
.br { right: 0; bottom: 0; border-width: 0 6px 6px 0; }

.share-bar {
  position: absolute;
  top: 0;
  left: 50%;
  transform: translateX(-50%);
  display: flex;
  align-items: center;
  justify-content: space-between;
  width: 326px;
  height: 25px;
  padding: 0 4px 0 9px;
  border-radius: 0 0 5px 5px;
  background: #2c2f30;
  color: #f0f2f2;
  font-family: 'Noto Sans CJK SC', sans-serif;
  font-size: 12px;
}

.share-bar svg { width: 15px; height: 15px; }
.share-bar i { width: 1px; height: 14px; background: #45494a; }

.share-bar button {
  height: 18px;
  padding: 0 5px;
  border-radius: 3px;
  background: #a8402a;
  font-size: 11px;
  line-height: 18px;
}

.speaking {
  position: absolute;
  top: 66px;
  right: 31px;
  display: flex;
  align-items: center;
  width: 242px;
  height: 36px;
  padding: 0 2px 0 12px;
  background: #2c2f31;
  color: #f0f2f2;
  font-family: 'Noto Sans CJK SC', sans-serif;
  font-size: 12px;
}

.speaking svg { width: 12px; height: 18px; }

.speaking span {
  flex: 1;
  margin-left: 11px;
  padding-left: 9px;
  border-left: 1px solid #494d4f;
}

.speaking .wave { width: 38px; height: 26px; }

.side-menu {
  position: absolute;
  left: 0;
  top: 853px;
  display: flex;
  align-items: center;
  justify-content: flex-end;
  width: 36px;
  height: 30px;
  padding-right: 9px;
  border-radius: 0 5px 5px 0;
  background: rgba(118, 124, 124, 0.8);
}

.side-menu svg { width: 18px; height: 16px; }

.cursor {
  position: absolute;
  left: 42px;
  top: 315px;
  width: 12px;
  height: 20px;
}

.caption {
  position: absolute;
  left: 0;
  right: 0;
  bottom: 92px;
  font-family: 'Noto Sans CJK SC', sans-serif;
  font-size: 112px;
  font-weight: 500;
  line-height: 120px;
  text-align: center;
  white-space: nowrap;
  color: #0020fa;
  pointer-events: none;
}
</style>
